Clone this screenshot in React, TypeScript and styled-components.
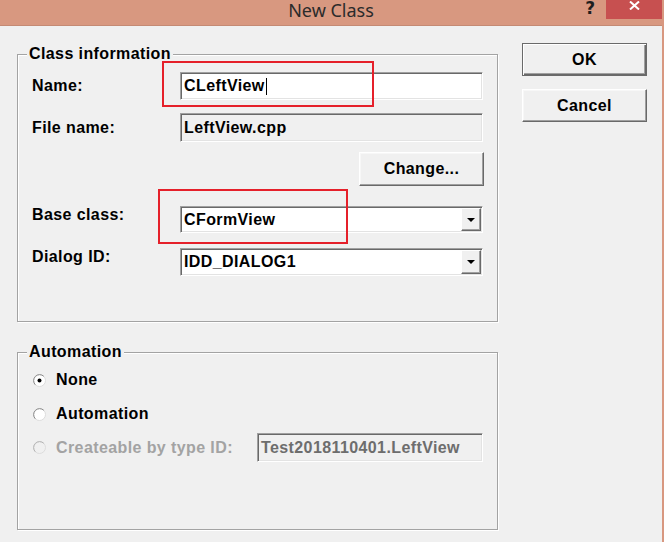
import React from "react";
import styled, { createGlobalStyle } from "styled-components";

const Global = createGlobalStyle`
  html, body { margin: 0; padding: 0; background: #f0f0f0; }
  body { font-family: "Liberation Sans", Arial, sans-serif; }
  #root { width: 664px; height: 542px; }
`;

const Window = styled.div`
  position: relative;
  width: 664px;
  height: 542px;
  box-sizing: border-box;
  background: #f0f0f0;
  border-right: 2px solid #d89880;
  display: flex;
  flex-direction: column;
  overflow: hidden;
  font: bold 16px "Liberation Sans", Arial, sans-serif;
  letter-spacing: 0.4px;
  color: #000;
`;

const TitleBar = styled.div`
  height: 26px;
  box-sizing: border-box;
  background: #d89880;
  border-bottom: 1px solid #c48a74;
  display: grid;
  grid-template-columns: 1fr auto 1fr;
  align-items: start;
`;

const TitleText = styled.div`
  grid-column: 2;
  font: normal 18px "Noto Sans", "Open Sans", sans-serif;
  line-height: 20px;
  letter-spacing: 0;
  color: #2b2b2b;
`;

const TitleControls = styled.div`
  grid-column: 3;
  justify-self: end;
  display: flex;
  align-items: flex-start;
  gap: 11px;
`;

const HelpGlyph = styled.span`
  font: bold 17px "DejaVu Sans", sans-serif;
  line-height: 17px;
  color: #1e1e1e;
  letter-spacing: 0;
`;

const CloseButton = styled.div`
  width: 56px;
  height: 19px;
  background: #c75050;
  display: flex;
  justify-content: center;
  align-items: flex-start;
  padding-top: 1px;
  box-sizing: border-box;
`;

const Content = styled.div`
  display: flex;
  align-items: flex-start;
  gap: 24px;
  padding: 17px 0 0 17px;
`;

const LeftColumn = styled.div`
  width: 481px;
  padding-top: 11px;
  display: flex;
  flex-direction: column;
  gap: 30px;
`;

const RightColumn = styled.div`
  width: 125px;
  display: flex;
  flex-direction: column;
  gap: 13px;
`;

const Group = styled.div<{ $height: number }>`
  position: relative;
  box-sizing: border-box;
  height: ${(p) => p.$height}px;
  border: 1px solid #a3a3a3;
  box-shadow: 1px 1px 0 #ffffff, inset 1px 1px 0 #ffffff;
  display: flex;
  flex-direction: column;
`;

const GroupCaption = styled.div`
  position: absolute;
  top: -10px;
  left: 9px;
  padding: 0 2px;
  background: #f0f0f0;
  line-height: 18px;
`;

const FormRow = styled.div<{ $height: number; $top: number; $end?: boolean }>`
  display: flex;
  align-items: center;
  justify-content: ${(p) => (p.$end ? "flex-end" : "flex-start")};
  height: ${(p) => p.$height}px;
  margin-top: ${(p) => p.$top}px;
  padding: 0 ${(p) => (p.$end ? 13 : 14)}px 0 14px;
`;

const FieldLabel = styled.div<{ $lift?: number }>`
  width: 148px;
  flex: none;
  margin-bottom: ${(p) => p.$lift ?? 0}px;
`;

const Sunken = styled.div<{ $readonly?: boolean; $width?: number }>`
  box-sizing: border-box;
  height: 100%;
  ${(p) => (p.$width ? `width: ${p.$width}px; flex: none;` : "flex: 1;")}
  background: ${(p) => (p.$readonly ? "#f0f0f0" : "#ffffff")};
  border: 1px solid;
  border-color: #a0a0a0 #ffffff #ffffff #a0a0a0;
  box-shadow: inset 1px 1px 0 #696969, inset -1px -1px 0 #e3e3e3;
  display: flex;
  align-items: stretch;
  padding: 1px;
`;

const FieldText = styled.div<{ $muted?: boolean }>`
  flex: 1;
  display: flex;
  align-items: center;
  padding-left: 2px;
  white-space: nowrap;
  color: ${(p) => (p.$muted ? "#6d6d6d" : "#000")};
`;

const Caret = styled.span`
  display: inline-block;
  width: 1px;
  height: 17px;
  background: #000;
  margin-left: 1px;
`;

const DropButton = styled.div`
  width: 20px;
  flex: none;
  box-sizing: border-box;
  background: #f0f0f0;
  border: 1px solid;
  border-color: #ffffff #696969 #696969 #ffffff;
  box-shadow: inset -1px -1px 0 #a0a0a0;
  display: flex;
  align-items: center;
  justify-content: center;
`;

const Arrow = styled.span`
  width: 0;
  height: 0;
  border-left: 4px solid transparent;
  border-right: 4px solid transparent;
  border-top: 4px solid #000;
`;

const PushButton = styled.div<{ $default?: boolean; $height: number }>`
  box-sizing: border-box;
  width: 125px;
  height: ${(p) => p.$height}px;
  background: #f0f0f0;
  border: 1px solid;
  border-color: ${(p) =>
    p.$default ? "#6a6a6a" : "#ffffff #696969 #696969 #ffffff"};
  box-shadow: ${(p) =>
    p.$default
      ? "inset 1px 1px 0 #ffffff, inset -1px -1px 0 #696969, inset -2px -2px 0 #a0a0a0"
      : "inset -1px -1px 0 #a0a0a0, inset 1px 1px 0 #f7f7f7"};
  display: flex;
  align-items: center;
  justify-content: center;
`;

const RadioRow = styled.div<{ $height: number; $top: number }>`
  display: flex;
  align-items: center;
  height: ${(p) => p.$height}px;
  margin-top: ${(p) => p.$top}px;
  padding-left: 15px;
`;

const RadioText = styled.span<{ $disabled?: boolean; $width?: number }>`
  margin-left: 10px;
  color: ${(p) => (p.$disabled ? "#a3a3a3" : "#000")};
  ${(p) => (p.$width ? `width: ${p.$width}px; flex: none;` : "")}
  white-space: nowrap;
`;

const Annotation = styled.div<{ $x: number; $y: number; $w: number; $h: number }>`
  position: absolute;
  left: ${(p) => p.$x}px;
  top: ${(p) => p.$y}px;
  width: ${(p) => p.$w}px;
  height: ${(p) => p.$h}px;
  box-sizing: border-box;
  border: 2px solid #e5202a;
  pointer-events: none;
`;

const Radio: React.FC<{ checked?: boolean; disabled?: boolean }> = ({ checked, disabled }) => (
  <svg width="13" height="13" viewBox="0 0 13 13">
    <circle cx="6.5" cy="6.5" r="6" fill={disabled ? "#f0f0f0" : "#ffffff"} stroke="#dcdcdc" strokeWidth="1" />
    <path d="M 2.26 10.74 A 6 6 0 0 1 10.74 2.26" fill="none" stroke={disabled ? "#b4b4b4" : "#8a8a8a"} strokeWidth="1" />
    {checked && <circle cx="6.5" cy="6.5" r="2" fill="#000" />}
  </svg>
);

export default function App() {
  return (
    <>
      <Global />
      <Window>
        <TitleBar>
          <TitleText>New Class</TitleText>
          <TitleControls>
            <HelpGlyph>?</HelpGlyph>
            <CloseButton>
              <svg width="11" height="9" viewBox="0 0 11 9">
                <path d="M1 0.5 L10 8.5 M10 0.5 L1 8.5" stroke="#fff" strokeWidth="2" />
              </svg>
            </CloseButton>
          </TitleControls>
        </TitleBar>
        <Content>
          <LeftColumn>
            <Group $height={268}>
              <GroupCaption>Class information</GroupCaption>
              <FormRow $height={28} $top={17}>
                <FieldLabel>Name:</FieldLabel>
                <Sunken>
                  <FieldText>
                    CLeftView
                    <Caret />
                  </FieldText>
                </Sunken>
              </FormRow>
              <FormRow $height={29} $top={13}>
                <FieldLabel>File name:</FieldLabel>
                <Sunken $readonly>
                  <FieldText>LeftView.cpp</FieldText>
                </Sunken>
              </FormRow>
              <FormRow $height={34} $top={10} $end>
                <PushButton $height={34}>Change...</PushButton>
              </FormRow>
              <FormRow $height={27} $top={20}>
                <FieldLabel $lift={9}>Base class:</FieldLabel>
                <Sunken>
                  <FieldText>CFormView</FieldText>
                  <DropButton>
                    <Arrow />
                  </DropButton>
                </Sunken>
              </FormRow>
              <FormRow $height={28} $top={15}>
                <FieldLabel $lift={11}>Dialog ID:</FieldLabel>
                <Sunken>
                  <FieldText>IDD_DIALOG1</FieldText>
                  <DropButton>
                    <Arrow />
                  </DropButton>
                </Sunken>
              </FormRow>
            </Group>
            <Group $height={178}>
              <GroupCaption>Automation</GroupCaption>
              <RadioRow $height={20} $top={17}>
                <Radio checked />
                <RadioText>None</RadioText>
              </RadioRow>
              <RadioRow $height={20} $top={14}>
                <Radio />
                <RadioText>Automation</RadioText>
              </RadioRow>
              <RadioRow $height={29} $top={9}>
                <Radio disabled />
                <RadioText $disabled $width={201}>
                  Createable by type ID:
                </RadioText>
                <Sunken $readonly $width={226}>
                  <FieldText $muted>Test2018110401.LeftView</FieldText>
                </Sunken>
              </RadioRow>
            </Group>
          </LeftColumn>
          <RightColumn>
            <PushButton $default $height={33}>OK</PushButton>
            <PushButton $height={33}>Cancel</PushButton>
          </RightColumn>
        </Content>
        <Annotation $x={162} $y={61} $w={212} $h={46} />
        <Annotation $x={158} $y={189} $w={190} $h={55} />
      </Window>
    </>
  );
}
